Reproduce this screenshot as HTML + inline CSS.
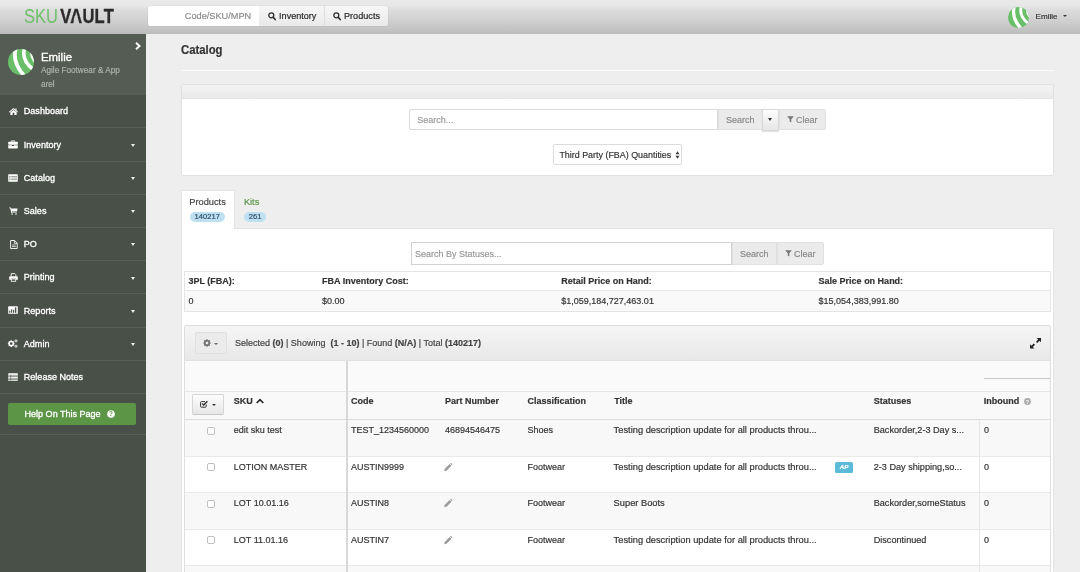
<!DOCTYPE html>
<html lang="en">
<head>
<meta charset="utf-8">
<title>SkuVault - Catalog</title>
<style>
*{box-sizing:border-box;margin:0;padding:0}
html,body{width:1080px;height:572px;overflow:hidden}
body{background:#eeeeee;font-family:"Liberation Sans",Arial,Helvetica,sans-serif;font-size:9px;color:#333;position:relative}
.abs{position:absolute}
.t{position:absolute;white-space:nowrap;line-height:14px;height:14px;-webkit-text-stroke:0.18px currentColor}
.b{font-weight:bold}
svg{display:block;position:absolute;overflow:visible}

/* top bar */
#topbar{position:absolute;left:0;top:0;width:1080px;height:34px;background:linear-gradient(#e9e9e9 0%,#e8e8e8 14%,#e3e4e4 20%,#dcdcdc 30%,#d2d2d2 55%,#c7c7c7 80%,#bebebe 97%,#bbbbbb 100%)}
#logo{position:absolute;left:24.1px;top:3.7px;font-size:19.4px;line-height:24px;letter-spacing:0;white-space:nowrap;transform:scaleX(0.853);transform-origin:0 0}
#logo .s{color:#6cc067;font-weight:normal}
#logo .v{color:#2b2b2b;font-weight:bold;margin-left:2.6px;letter-spacing:0.25px;-webkit-text-stroke:0.35px #2b2b2b}
#logo .la{position:relative;display:inline}
#qs{position:absolute;left:148.3px;top:5.9px;width:239.8px;height:20px;border-radius:2px;background:linear-gradient(#f7f7f7,#e9e9e9);overflow:hidden;box-shadow:0 0 0 0.5px rgba(0,0,0,.06)}
#qs .in{position:absolute;left:0;top:0;width:111px;height:20px;background:#fff;border-radius:2px 0 0 2px}
#qs .sep{position:absolute;top:0;width:1px;height:20px;background:#dedede}

/* sidebar */
#side{position:absolute;left:0;top:34px;width:146px;height:538px;background:#495048}
#user{position:absolute;left:0;top:0;width:146px;height:60px;background:#555c53}
.mi{position:absolute;left:0;width:146px;height:33.23px;border-top:1px solid #586056}
.mi .lab{position:absolute;left:23.8px;top:9.2px;line-height:14px;font-size:9.05px;color:#fff;font-weight:normal;-webkit-text-stroke:0.3px #fff;white-space:nowrap}
.mi .car{position:absolute;left:130.8px;top:15.3px;width:0;height:0;border-left:2.7px solid transparent;border-right:2.7px solid transparent;border-top:3px solid #f0f0f0}
#help{position:absolute;left:8.2px;top:368.5px;width:127.8px;height:22px;border-radius:2px;background:#5c9546;color:#fff}

/* panels */
.panel{position:absolute;background:#fff;border:1px solid #e1e1e1;border-radius:2px}
.btn{position:absolute;background:#ebebeb;color:#888;border:1px solid #e0e0e0}
.inp{position:absolute;background:#fff;border:1px solid #dadada}
.ph{color:#999}
.cell{position:absolute;white-space:nowrap;line-height:14px;height:14px;color:#333}
</style>
</head>
<body>
<div id="page" style="position:absolute;left:0;top:0;width:1080px;height:572px;overflow:hidden;will-change:transform">

<!-- ================= TOP BAR ================= -->
<div id="topbar">
  <div id="logo"><span class="s">SKU</span><span class="v">V<span class="la">A<svg style="left:0;top:0.217em;width:0.7222em;height:0.688em" viewBox="0 0 1479 1409" preserveAspectRatio="none"><defs><linearGradient id="tbg" gradientUnits="userSpaceOnUse" x1="0" y1="-958" x2="0" y2="2631"><stop offset="0" stop-color="#e9e9e9"/><stop offset="0.14" stop-color="#e8e8e8"/><stop offset="0.2" stop-color="#e3e4e4"/><stop offset="0.3" stop-color="#dcdcdc"/><stop offset="0.55" stop-color="#d2d2d2"/><stop offset="0.8" stop-color="#c7c7c7"/><stop offset="0.97" stop-color="#bebebe"/><stop offset="1" stop-color="#bbbbbb"/></linearGradient></defs><polygon points="436,1200 1043,1200 905,740 574,740" fill="url(#tbg)"/></svg></span>ULT</span></div>
  <div id="qs">
    <div class="in"></div>
    <div class="t ph" style="left:36.5px;top:2.8px;font-size:9.2px;color:#8c8c8c">Code/SKU/MPN</div>
    <div class="sep" style="left:176px"></div>
    <div class="t" style="left:130.8px;top:2.8px;font-size:9.05px;color:#2b2b2b;-webkit-text-stroke:0.2px #2b2b2b">Inventory</div>
    <div class="t" style="left:195.7px;top:2.8px;font-size:9.15px;color:#2b2b2b;-webkit-text-stroke:0.2px #2b2b2b">Products</div>
    <svg style="left:120px;top:5.8px" width="8" height="8.4" viewBox="0 0 8 8.4"><circle cx="3.3" cy="3.3" r="2.5" fill="none" stroke="#2b2b2b" stroke-width="1.3"/><path d="M5.2 5.3 L7.2 7.6" stroke="#2b2b2b" stroke-width="1.6" stroke-linecap="round"/></svg>
    <svg style="left:184.6px;top:5.8px" width="8" height="8.4" viewBox="0 0 8 8.4"><circle cx="3.3" cy="3.3" r="2.5" fill="none" stroke="#2b2b2b" stroke-width="1.3"/><path d="M5.2 5.3 L7.2 7.6" stroke="#2b2b2b" stroke-width="1.6" stroke-linecap="round"/></svg>
  </div>
  <!-- avatar -->
  <svg style="left:1008px;top:6.5px" width="21" height="21" viewBox="0 0 26 26">
    <defs><clipPath id="cpa"><circle cx="13" cy="13" r="13"/></clipPath></defs>
    <circle cx="13" cy="13" r="13" fill="#69bf68"/>
    <g clip-path="url(#cpa)" fill="none" stroke="#fff" stroke-width="2.6">
      <path d="M7.9 -1 Q3.6 13 16.4 27" stroke-width="4"/>
      <path d="M16.6 -1 Q13 11 25 20.4" stroke-width="3.6"/>
      <path d="M23.2 3 Q23 8 26.5 12.5" stroke-width="2.1"/>
    </g>
  </svg>
  <div class="t" style="left:1035.6px;top:9.8px;font-size:8.05px;color:#333">Emilie</div>
  <div class="abs" style="left:1062.9px;top:15.2px;width:0;height:0;border-left:2.5px solid transparent;border-right:2.5px solid transparent;border-top:2.8px solid #333"></div>
</div>

<!-- ================= SIDEBAR ================= -->
<div id="side">
  <div id="user">
    <svg style="left:8.1px;top:14.9px" width="26" height="26" viewBox="0 0 26 26">
      <defs><clipPath id="cpb"><circle cx="13" cy="13" r="13"/></clipPath></defs>
      <circle cx="13" cy="13" r="13" fill="#69bf68"/>
      <g clip-path="url(#cpb)" fill="none" stroke="#fff" stroke-width="2.6">
        <path d="M7.9 -1 Q3.6 13 16.4 27" stroke-width="3.8"/>
        <path d="M16.6 -1 Q13 11 25 20.4" stroke-width="3.5"/>
        <path d="M23.2 3 Q23 8 26.5 12.5" stroke-width="2.1"/>
      </g>
    </svg>
    <div class="t" style="left:41px;top:16px;font-size:11.4px;color:#fff;-webkit-text-stroke:0.35px #fff">Emilie</div>
    <div class="t" style="left:41px;top:30.4px;font-size:8.2px;color:#aeb3ab;line-height:13.5px;height:27px;white-space:normal;width:90px">Agile Footwear &amp; App<br>arel</div>
    <svg style="left:135px;top:7.7px" width="6" height="8" viewBox="0 0 6 8"><path d="M1 0.7 L4.5 4 L1 7.3" fill="none" stroke="#fff" stroke-width="1.9"/></svg>
  </div>
  <div class="mi" style="top:60.10px"><svg style="left:8.7px;top:12.9px" width="9" height="7" viewBox="0 0 9 7"><path d="M4.5 0.1 L0 3.7 L0.6 4.4 L4.5 1.3 L8.4 4.4 L9 3.7 Z" fill="#fff"/><path d="M1.4 4.3 L4.5 1.9 L7.6 4.3 V7 H5.4 V4.8 H3.6 V7 H1.4 Z" fill="#fff"/><rect x="6.4" y="0.5" width="1.1" height="2.2" fill="#fff"/></svg><div class="lab">Dashboard</div></div>
  <div class="mi" style="top:93.33px"><svg style="left:8px;top:11.5px" width="10" height="9" viewBox="0 0 10 9"><path d="M3.4 1.8 V0.9 H6.6 V1.8" fill="none" stroke="#fff" stroke-width="0.9"/><rect x="0.2" y="1.8" width="9.6" height="2.9" rx="0.6" fill="#fff"/><path d="M0.2 5.3 H4 V6.1 H6 V5.3 H9.8 V7.8 Q9.8 8.4 9.2 8.4 H0.8 Q0.2 8.4 0.2 7.8 Z" fill="#fff"/></svg><div class="lab">Inventory</div><div class="car"></div></div>
  <div class="mi" style="top:126.56px"><svg style="left:8px;top:12.0px" width="10" height="8" viewBox="0 0 10 8"><rect x="0.2" y="0.3" width="9.6" height="7.4" rx="0.6" fill="#fff"/><g fill="#495048" opacity="0.75"><rect x="1" y="2" width="1.6" height="0.7"/><rect x="3.2" y="2" width="5.8" height="0.7"/><rect x="1" y="3.7" width="1.6" height="0.7"/><rect x="3.2" y="3.7" width="5.8" height="0.7"/><rect x="1" y="5.4" width="1.6" height="0.7"/><rect x="3.2" y="5.4" width="5.8" height="0.7"/></g></svg><div class="lab">Catalog</div><div class="car"></div></div>
  <div class="mi" style="top:159.79px"><svg style="left:9px;top:12.0px" width="9" height="8" viewBox="0 0 9 8"><path d="M0.2 0.6 H1.8 L2.2 1.4 H8.6 L8 4.6 H2.8 L3 5.4 H7.8 V6.1 H2.3 L1.2 1.3 H0.2 Z" fill="#fff"/><circle cx="3.1" cy="7" r="0.8" fill="#fff"/><circle cx="7" cy="7" r="0.8" fill="#fff"/></svg><div class="lab">Sales</div><div class="car"></div></div>
  <div class="mi" style="top:193.02px"><svg style="left:9.5px;top:11.5px" width="8" height="9" viewBox="0 0 8 9"><path d="M0.6 0.5 H4.6 L7.2 3.1 V8.5 H0.6 Z" fill="none" stroke="#fff" stroke-width="0.9"/><path d="M4.4 0.5 V3.3 H7.2" fill="none" stroke="#fff" stroke-width="0.8"/><path d="M2 5 H5.8 M2 6.6 H5.8" stroke="#fff" stroke-width="0.7"/></svg><div class="lab">PO</div><div class="car"></div></div>
  <div class="mi" style="top:226.25px"><svg style="left:8.5px;top:11.5px" width="9" height="9" viewBox="0 0 9 9"><path d="M2.2 3.4 V0.6 H5.8 L6.8 1.6 V3.4" fill="none" stroke="#fff" stroke-width="0.9"/><path d="M0.2 4 Q0.2 3.2 1 3.2 H8 Q8.8 3.2 8.8 4 V6.8 H7 V5.6 H2 V6.8 H0.2 Z" fill="#fff"/><rect x="2.3" y="6" width="4.4" height="2.3" fill="none" stroke="#fff" stroke-width="0.8"/></svg><div class="lab">Printing</div><div class="car"></div></div>
  <div class="mi" style="top:259.48px"><svg style="left:8px;top:12.0px" width="10" height="8" viewBox="0 0 10 8"><rect x="0.2" y="0.3" width="9.6" height="7.4" rx="0.5" fill="#fff"/><g fill="#495048"><rect x="1.2" y="4.6" width="1.1" height="2.2"/><rect x="3.1" y="3.2" width="1.1" height="3.6"/><rect x="5" y="3.9" width="1.1" height="2.9"/><rect x="6.9" y="1.4" width="1.4" height="5.4"/></g></svg><div class="lab">Reports</div><div class="car"></div></div>
  <div class="mi" style="top:292.71px"><svg style="left:8px;top:11.5px" width="10" height="9" viewBox="0 0 10 9"><circle cx="3.2" cy="4.6" r="2.1" fill="none" stroke="#fff" stroke-width="1.5"/><g stroke="#fff" stroke-width="1.1"><path d="M3.2 1.3 V2.2 M3.2 7 V7.9 M-0.1 4.6 H0.8 M5.6 4.6 H6.5 M0.9 2.3 L1.5 2.9 M4.9 6.3 L5.5 6.9 M0.9 6.9 L1.5 6.3 M4.9 2.9 L5.5 2.3"/></g><circle cx="8" cy="1.9" r="1.05" fill="none" stroke="#fff" stroke-width="0.9"/><circle cx="8" cy="7.2" r="1.05" fill="none" stroke="#fff" stroke-width="0.9"/></svg><div class="lab">Admin</div><div class="car"></div></div>
  <div class="mi" style="top:325.94px"><svg style="left:8px;top:12.0px" width="10" height="8" viewBox="0 0 10 8"><rect x="0.2" y="0.2" width="9.6" height="7.6" rx="0.5" fill="#fff"/><g fill="#495048"><rect x="0.2" y="1.9" width="9.6" height="0.55"/><rect x="0.2" y="3.4" width="9.6" height="0.55"/><rect x="0.2" y="4.9" width="9.6" height="0.55"/><rect x="0.2" y="6.4" width="9.6" height="0.55"/><rect x="2.6" y="1.9" width="0.5" height="5.9"/></g></svg><div class="lab">Release Notes</div></div>
  <div class="mi" style="top:359.17px;height:42px"></div>
  <div class="mi" style="top:400.37px;height:2px"></div>
  <div id="help"><div class="t" style="left:16.4px;top:4px;font-size:9.02px;color:#fff;-webkit-text-stroke:0.3px #fff">Help On This Page</div>
    <svg style="left:99px;top:7px" width="8" height="8" viewBox="0 0 8 8"><circle cx="4" cy="4" r="3.8" fill="#fff"/><text x="4" y="6.3" font-size="6.4" font-weight="bold" text-anchor="middle" fill="#5c9546" font-family="Liberation Sans, sans-serif">?</text></svg>
  </div>
</div>

<!-- ================= MAIN ================= -->
<div id="main">
  <div class="t b" style="left:180.5px;top:42px;font-size:12.7px;transform:scaleX(0.892);transform-origin:0 50%;color:#333;line-height:16px;height:16px">Catalog</div>
  <div class="abs" style="left:180.5px;top:69.7px;width:873.5px;height:1px;background:#fafafa"></div>

  <!-- search panel -->
  <div class="panel" style="left:180.5px;top:84.3px;width:873.5px;height:92px">
    <div class="abs" style="left:0;top:0;width:871.5px;height:13.6px;background:linear-gradient(#f3f3f3,#e9e9e9);border-bottom:1px solid #e4e4e4"></div>
  </div>
  <div class="inp" style="left:409px;top:108.7px;width:309px;height:21.6px;border-radius:2px 0 0 2px"></div>
  <div class="t ph" style="left:417.3px;top:112.5px">Search...</div>
  <div class="btn" style="left:717.5px;top:108.7px;width:45px;height:21.6px"></div>
  <div class="t" style="left:726px;top:112.5px;color:#888">Search</div>
  <div class="btn" style="left:761.5px;top:108.5px;width:17.6px;height:22.3px;background:linear-gradient(#fdfdfd,#e6e6e6);border-color:#d8d8d8;box-shadow:0 1px 1px rgba(0,0,0,.1)"></div>
  <div class="abs" style="left:767.7px;top:118.4px;width:0;height:0;border-left:2.6px solid transparent;border-right:2.6px solid transparent;border-top:3px solid #333"></div>
  <div class="btn" style="left:779px;top:108.7px;width:46.5px;height:21.6px;border-radius:0 2px 2px 0"></div>
  <svg style="left:787px;top:116px" width="7" height="7" viewBox="0 0 7 7"><path d="M0.2 0.3 H6.8 L4.3 3.2 V6.6 L2.7 5.6 V3.2 Z" fill="#777"/></svg>
  <div class="t" style="left:796px;top:112.5px;color:#888">Clear</div>

  <div class="inp" style="left:553.3px;top:144.3px;width:129px;height:21.2px;border-radius:2px;border-color:#dcdcdc"></div>
  <div class="t" style="left:559.4px;top:148px;color:#333;font-size:8.92px">Third Party (FBA) Quantities</div>
  <svg style="left:674.5px;top:151px" width="5" height="8" viewBox="0 0 5 8"><path d="M2.5 0.3 L4.6 3.2 H0.4 Z M2.5 7.7 L4.6 4.8 H0.4 Z" fill="#444"/></svg>

  <!-- tabs -->
  <div class="abs" style="left:180.5px;top:190px;width:54px;height:39px;background:#fff;border:1px solid #e3e3e3;border-bottom:none;border-radius:2px 2px 0 0"></div>
  <div class="t" style="left:189.3px;top:195.3px;color:#444;font-size:9.25px">Products</div>
  <div class="abs" style="left:189.7px;top:211.8px;width:35.2px;height:10.4px;border-radius:5.2px;background:#bfe0f1"></div>
  <div class="t" style="left:189.7px;top:210px;width:35.2px;text-align:center;font-size:7.6px;color:#2b4f6c">140217</div>
  <div class="t" style="left:243.9px;top:195.3px;color:#5a9445;font-size:9.25px">Kits</div>
  <div class="abs" style="left:244.1px;top:211.8px;width:22.2px;height:10.4px;border-radius:5.2px;background:#bfe0f1"></div>
  <div class="t" style="left:244.1px;top:210px;width:22.2px;text-align:center;font-size:7.6px;color:#2b4f6c">261</div>

  <!-- tab content -->
  <div class="abs" style="left:180.5px;top:228.3px;width:873.5px;height:350px;background:#fff;border:1px solid #e3e3e3"></div>
  <div class="abs" style="left:181.5px;top:228px;width:52px;height:2px;background:#fff"></div>

  <div class="inp" style="left:410.8px;top:242.3px;width:321.5px;height:22.4px;border-color:#d2d2d2"></div>
  <div class="t ph" style="left:415px;top:246.5px">Search By Statuses...</div>
  <div class="btn" style="left:731.7px;top:242.3px;width:45.5px;height:22.4px"></div>
  <div class="t" style="left:740px;top:246.5px;color:#888">Search</div>
  <div class="btn" style="left:776.5px;top:242.3px;width:47.5px;height:22.4px;border-radius:0 2px 2px 0"></div>
  <svg style="left:785px;top:250px" width="7" height="7" viewBox="0 0 7 7"><path d="M0.2 0.3 H6.8 L4.3 3.2 V6.6 L2.7 5.6 V3.2 Z" fill="#777"/></svg>
  <div class="t" style="left:794px;top:246.5px;color:#888">Clear</div>

  <!-- summary table -->
  <div class="abs" style="left:184.4px;top:271px;width:866.4px;height:41.2px;background:#fff;border:1px solid #e5e5e5"></div>
  <div class="abs" style="left:185.4px;top:290.3px;width:864.4px;height:20.9px;background:#f9f9f9;border-top:1px solid #e6e6e6"></div>
  <div class="t b" style="left:188.5px;top:274px">3PL (FBA):</div>
  <div class="t b" style="left:322px;top:274px">FBA Inventory Cost:</div>
  <div class="t b" style="left:561.3px;top:274px">Retail Price on Hand:</div>
  <div class="t b" style="left:818.6px;top:274px">Sale Price on Hand:</div>
  <div class="t" style="left:188.5px;top:294.4px">0</div>
  <div class="t" style="left:322px;top:294.4px">$0.00</div>
  <div class="t" style="left:561.3px;top:294.4px">$1,059,184,727,463.01</div>
  <div class="t" style="left:818.6px;top:294.4px">$15,054,383,991.80</div>

  <!-- grid -->
  <div class="abs" style="left:184.4px;top:325px;width:866.4px;height:260px;background:#fafafa;border:1px solid #dedede;border-radius:2px 2px 0 0"></div>
  <div class="abs" style="left:185.4px;top:326px;width:864.4px;height:35.2px;background:linear-gradient(#f5f5f5,#e8e8e8);border-bottom:1px solid #e0e0e0"></div>
  <div class="abs" style="left:194.8px;top:332.4px;width:32.4px;height:21.2px;background:#ebebeb;border:1px solid #e0e0e0;border-radius:2px"></div>
  <svg style="left:203px;top:339.3px" width="8" height="8" viewBox="0 0 8 8"><circle cx="4" cy="4" r="2.2" fill="none" stroke="#666" stroke-width="1.5"/><g stroke="#666" stroke-width="1.2"><path d="M4 0.2 V1.4 M4 6.6 V7.8 M0.2 4 H1.4 M6.6 4 H7.8 M1.3 1.3 L2.1 2.1 M5.9 5.9 L6.7 6.7 M1.3 6.7 L2.1 5.9 M5.9 2.1 L6.7 1.3"/></g></svg>
  <div class="abs" style="left:214.3px;top:342.5px;width:0;height:0;border-left:2px solid transparent;border-right:2px solid transparent;border-top:2.3px solid #666"></div>
  <div class="t" style="left:235px;top:336.2px;color:#444">Selected <b>(0)</b> | Showing &nbsp;<b>(1 - 10)</b> | Found <b>(N/A)</b> | Total <b>(140217)</b></div>
  <svg style="left:1030px;top:338.4px" width="11" height="10.5" viewBox="0 0 11 10.5"><path d="M6.6 0 H11 V4.2 L9.5 2.8 L7.2 5 L6 3.8 L8.2 1.5 Z M4.4 10.5 H0 V6.3 L1.5 7.7 L3.8 5.5 L5 6.7 L2.8 9 Z" fill="#222"/></svg>

  <div class="abs" style="left:984.4px;top:377.6px;width:65.4px;height:1px;background:#c8c8c8"></div>
  <!-- header row -->
  <div class="abs" style="left:185.4px;top:391px;width:864.4px;height:29.3px;background:#f9f9f9;border-top:1px solid #e6e6e6;border-bottom:1px solid #dcdcdc"></div>
  <div class="abs" style="left:192.2px;top:393.7px;width:32.3px;height:21px;background:linear-gradient(#fdfdfd,#e7e7e7);border:1px solid #d6d6d6;border-bottom-color:#c6c6c6;border-radius:2px"></div>
  <svg style="left:200px;top:400.3px" width="8" height="8" viewBox="0 0 8 8"><path d="M6.2 4.4 V6.4 Q6.2 7.2 5.4 7.2 H1.4 Q0.6 7.2 0.6 6.4 V2.4 Q0.6 1.6 1.4 1.6 H5" fill="none" stroke="#333" stroke-width="1"/><path d="M2.2 3.6 L3.7 5.1 L7.4 1.2" fill="none" stroke="#333" stroke-width="1.4"/></svg>
  <div class="abs" style="left:212px;top:403.5px;width:0;height:0;border-left:2.1px solid transparent;border-right:2.1px solid transparent;border-top:2.4px solid #333"></div>
  <div class="t b" style="left:233.8px;top:394.2px">SKU</div>
  <svg style="left:256px;top:398.3px" width="8" height="6" viewBox="0 0 8 6"><path d="M0.7 5 L4 1.6 L7.3 5" fill="none" stroke="#222" stroke-width="1.6"/></svg>
  <div class="t b" style="left:351px;top:394.2px">Code</div>
  <div class="t b" style="left:444.9px;top:394.2px">Part Number</div>
  <div class="t b" style="left:527.5px;top:394.2px">Classification</div>
  <div class="t b" style="left:614.2px;top:394.2px">Title</div>
  <div class="t b" style="left:873.7px;top:394.2px">Statuses</div>
  <div class="t b" style="left:983.7px;top:394.2px">Inbound</div>
  <svg style="left:1024px;top:397.7px" width="7" height="7" viewBox="0 0 7 7"><circle cx="3.5" cy="3.5" r="3.4" fill="#aaa"/><text x="3.5" y="5.6" font-size="5.6" font-weight="bold" text-anchor="middle" fill="#f9f9f9" font-family="Liberation Sans, sans-serif">?</text></svg>

  <div class="abs" style="left:185.4px;top:420.30px;width:864.4px;height:36.45px;background:#f8f8f8;border-bottom:1px solid #e9e9e9"></div>
  <div class="abs" style="left:206.8px;top:426.70px;width:8.2px;height:8.2px;background:#fff;border:1px solid #c0c0c0;border-radius:2px"></div>
  <div class="t" style="left:233.8px;top:423.30px">edit sku test</div>
  <div class="t" style="left:351px;top:423.30px">TEST_1234560000</div>
  <div class="t" style="left:444.9px;top:423.30px">46894546475</div>
  <div class="t" style="left:527.5px;top:423.30px">Shoes</div>
  <div class="t" style="left:613.6px;top:423.30px;font-size:9.3px">Testing description update for all products throu...</div>
  <div class="t" style="left:873.7px;top:423.30px;font-size:9.13px">Backorder,2-3 Day s...</div>
  <div class="t" style="left:984px;top:423.30px">0</div>
  <div class="abs" style="left:185.4px;top:456.75px;width:864.4px;height:36.45px;background:#ffffff;border-bottom:1px solid #e9e9e9"></div>
  <div class="abs" style="left:206.8px;top:463.15px;width:8.2px;height:8.2px;background:#fff;border:1px solid #c0c0c0;border-radius:2px"></div>
  <div class="t" style="left:233.8px;top:459.75px">LOTION MASTER</div>
  <div class="t" style="left:351px;top:459.75px">AUSTIN9999</div>
  <svg style="left:444.2px;top:462.85px" width="8.4" height="8.4" viewBox="0 0 8.4 8.4"><path d="M0.2 8.2 L0.7 5.9 L5.6 1 L7.4 2.8 L2.5 7.7 Z M6.1 0.5 L6.6 0 Q6.9 -0.2 7.2 0.1 L8.3 1.2 Q8.6 1.5 8.3 1.8 L7.9 2.3 Z" fill="#9a9a9a"/></svg>
  <div class="t" style="left:527.5px;top:459.75px">Footwear</div>
  <div class="t" style="left:613.6px;top:459.75px;font-size:9.3px">Testing description update for all products throu...</div>
  <div class="abs" style="left:834.8px;top:461.65px;width:18.6px;height:11.1px;background:#5bbbd9;border-radius:1.5px"></div>
  <div class="t b" style="left:834.8px;top:460.25px;width:18.6px;text-align:center;font-size:6.2px;font-style:italic;color:#fff">AP</div>
  <div class="t" style="left:873.7px;top:459.75px;font-size:9.13px">2-3 Day shipping,so...</div>
  <div class="t" style="left:984px;top:459.75px">0</div>
  <div class="abs" style="left:185.4px;top:493.20px;width:864.4px;height:36.45px;background:#f8f8f8;border-bottom:1px solid #e9e9e9"></div>
  <div class="abs" style="left:206.8px;top:499.60px;width:8.2px;height:8.2px;background:#fff;border:1px solid #c0c0c0;border-radius:2px"></div>
  <div class="t" style="left:233.8px;top:496.20px">LOT 10.01.16</div>
  <div class="t" style="left:351px;top:496.20px">AUSTIN8</div>
  <svg style="left:444.2px;top:499.30px" width="8.4" height="8.4" viewBox="0 0 8.4 8.4"><path d="M0.2 8.2 L0.7 5.9 L5.6 1 L7.4 2.8 L2.5 7.7 Z M6.1 0.5 L6.6 0 Q6.9 -0.2 7.2 0.1 L8.3 1.2 Q8.6 1.5 8.3 1.8 L7.9 2.3 Z" fill="#9a9a9a"/></svg>
  <div class="t" style="left:527.5px;top:496.20px">Footwear</div>
  <div class="t" style="left:613.6px;top:496.20px;font-size:9.3px">Super Boots</div>
  <div class="t" style="left:873.7px;top:496.20px;font-size:9.13px">Backorder,someStatus</div>
  <div class="t" style="left:984px;top:496.20px">0</div>
  <div class="abs" style="left:185.4px;top:529.65px;width:864.4px;height:36.45px;background:#ffffff;border-bottom:1px solid #e9e9e9"></div>
  <div class="abs" style="left:206.8px;top:536.05px;width:8.2px;height:8.2px;background:#fff;border:1px solid #c0c0c0;border-radius:2px"></div>
  <div class="t" style="left:233.8px;top:532.65px">LOT 11.01.16</div>
  <div class="t" style="left:351px;top:532.65px">AUSTIN7</div>
  <svg style="left:444.2px;top:535.75px" width="8.4" height="8.4" viewBox="0 0 8.4 8.4"><path d="M0.2 8.2 L0.7 5.9 L5.6 1 L7.4 2.8 L2.5 7.7 Z M6.1 0.5 L6.6 0 Q6.9 -0.2 7.2 0.1 L8.3 1.2 Q8.6 1.5 8.3 1.8 L7.9 2.3 Z" fill="#9a9a9a"/></svg>
  <div class="t" style="left:527.5px;top:532.65px">Footwear</div>
  <div class="t" style="left:613.6px;top:532.65px;font-size:9.3px">Testing description update for all products throu...</div>
  <div class="t" style="left:873.7px;top:532.65px;font-size:9.13px">Discontinued</div>
  <div class="t" style="left:984px;top:532.65px">0</div>
  <div class="abs" style="left:185.4px;top:566.10px;width:864.4px;height:10px;background:#f8f8f8"></div>
  <div class="abs" style="left:346px;top:361.2px;width:2px;height:215px;background:#d8d8d8"></div>
  <div class="abs" style="left:978.6px;top:419.6px;width:1px;height:160px;background:#e6e6e6"></div>
</div>

</div>
</body>
</html>
